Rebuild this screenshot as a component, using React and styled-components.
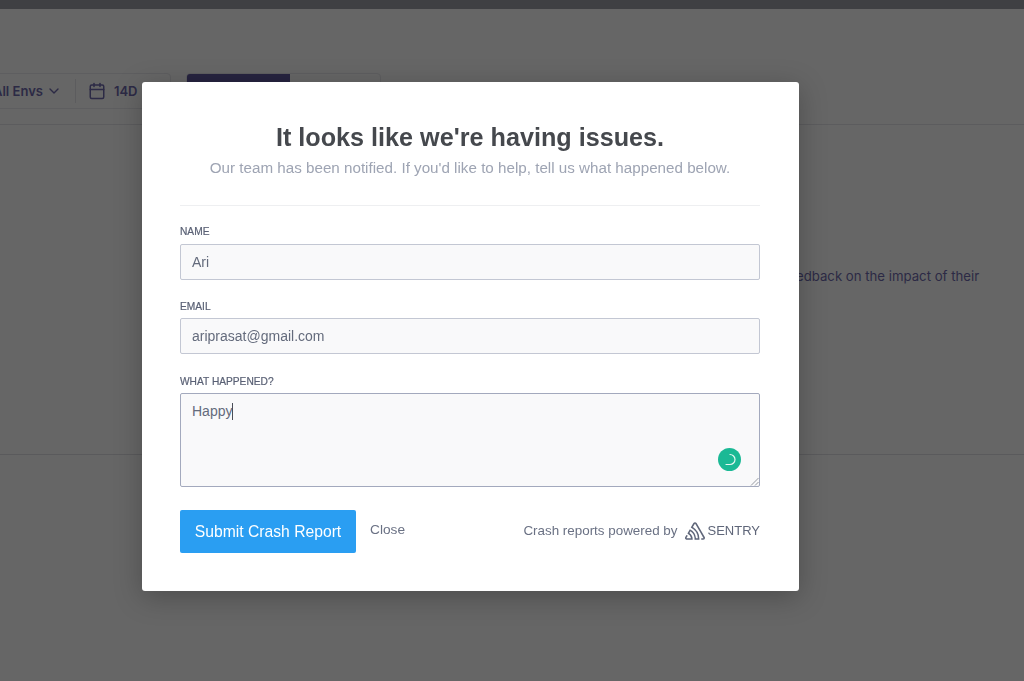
import React from 'react'
import styled, { createGlobalStyle } from 'styled-components'
import { ChevronDown, Calendar } from 'lucide-react'

const Global = createGlobalStyle`
  html, body {
    margin: 0;
    height: 100%;
    overflow: hidden;
    background: #666666;
  }
  * { box-sizing: border-box; }
`

const Page = styled.div`
  width: 1024px;
  height: 681px;
  overflow: hidden;
  background: #666666;
  font-family: Inter, sans-serif;
  color: #26233f;
`

const TopStrip = styled.div`
  height: 9px;
  background: #3f4043;
`

const Toolbar = styled.div`
  display: flex;
  align-items: flex-start;
  gap: 15px;
  height: 116px;
  padding: 64px 0 0 0;
  margin-left: -30px;
  border-bottom: 1px solid #5c5c5e;
`

const FilterGroup = styled.div`
  display: flex;
  align-items: center;
  width: 201px;
  height: 36px;
  padding-left: 22px;
  border: 1px solid #5e5e60;
  border-radius: 4px;
  font-size: 13px;
  font-weight: 600;
  color: #2c2a45;
`

const FilterItem = styled.div`
  display: flex;
  align-items: center;
  gap: ${props => props.gap}px;
  height: 100%;
  padding-right: ${props => props.right}px;
  padding-left: ${props => props.left}px;
`

const Separator = styled.div`
  width: 1px;
  height: 24px;
  background: #5c5c5e;
`

const Tabs = styled.div`
  display: flex;
  width: 195px;
  height: 36px;
  border: 1px solid #5e5e60;
  border-radius: 4px;
  overflow: hidden;
`

const ActiveTab = styled.div`
  width: 103px;
  background: #26233f;
`

const Body = styled.div`
  height: 330px;
  padding-top: 142px;
  padding-left: 796px;
  white-space: nowrap;
  font-size: 13.2px;
  line-height: 18px;
  border-bottom: 1px solid #5a5a5c;
  color: #2c2a45;
`

const Overlay = styled.div`
  position: fixed;
  left: 142px;
  top: 82px;
`

const Modal = styled.div`
  width: 657px;
  height: 509px;
  padding: 38px 39px 0 38px;
  background: #ffffff;
  border-radius: 3px;
  font-family: "Liberation Sans", Arial, sans-serif;
  box-shadow: 0 6px 28px rgba(0, 0, 0, 0.25);
`

const Header = styled.div`
  height: 86px;
  text-align: center;
  border-bottom: 1px solid #eeeff1;
`

const Title = styled.h2`
  margin: 0;
  font-size: 25.2px;
  line-height: 34px;
  font-weight: 700;
  color: #45484d;
`

const Subtitle = styled.p`
  margin: 4px 0 0;
  font-size: 15.2px;
  line-height: 20px;
  color: #9ea4b3;
`

const Field = styled.div`
  display: flex;
  flex-direction: column;
  margin-top: ${props => props.top}px;
`

const Label = styled.label`
  font-size: 10.2px;
  line-height: 12px;
  height: 13px;
  -webkit-text-stroke: 0.2px #5a6175;
  color: #5a6175;
  margin-bottom: ${props => props.gap}px;
`

const Input = styled.div`
  display: flex;
  align-items: center;
  height: ${props => props.h}px;
  padding: 0 11px;
  background: #f9f9fa;
  border: 1px solid #c3c7d3;
  border-radius: 2px;
  font-size: 14px;
  color: #646b7c;
`

const TextArea = styled(Input)`
  position: relative;
  align-items: flex-start;
  padding-top: 8px;
  line-height: 18px;
  border-color: #a3a9bd;
`

const Caret = styled.span`
  display: inline-block;
  width: 1px;
  height: 17px;
  vertical-align: -4px;
  background: #4a4e57;
`

const GrammarBadge = styled.div`
  position: absolute;
  right: 18px;
  bottom: 15px;
  width: 23px;
  height: 23px;
  border-radius: 50%;
  background: #1bb995;
  display: flex;
  align-items: center;
  justify-content: center;
`

const Grip = styled.svg`
  position: absolute;
  right: 0;
  bottom: 0;
`

const Footer = styled.div`
  display: flex;
  align-items: center;
  margin-top: 23px;
  height: 43px;
`

const Submit = styled.button`
  width: 176px;
  height: 43px;
  padding: 0;
  border: 0;
  border-radius: 2px;
  background: #2a9ef2;
  color: #ffffff;
  font-family: inherit;
  font-size: 15.7px;
`

const CloseLink = styled.a`
  margin-left: 14px;
  margin-bottom: 4px;
  font-size: 13.7px;
  color: #6a7184;
`

const PoweredBy = styled.div`
  display: flex;
  align-items: center;
  margin-left: auto;
  margin-bottom: 2px;
  font-size: 13.4px;
  color: #6a7184;
`

const SentryWord = styled.span`
  margin-left: 3px;
  font-size: 13px;
  color: #5f6679;
`

const LogoMark = styled.svg`
  margin-left: 7px;
`

const SentryLogo = () => (
  <LogoMark width="20" height="18" viewBox="0 0 50 44" fill="#5f6679">
    <path d="M29,2.26a4.67,4.67,0,0,0-8,0L14.42,13.53A32.21,32.21,0,0,1,32.17,40.19H27.55A27.68,27.68,0,0,0,12.09,17.47L6,28a15.92,15.92,0,0,1,9.23,12.17H4.62A.76.76,0,0,1,4,39.06l2.94-5a10.74,10.74,0,0,0-3.36-1.9l-2.91,5a4.54,4.54,0,0,0,1.69,6.24A4.66,4.66,0,0,0,4.62,44H19.15a19.4,19.4,0,0,0-8-17.31l2.31-4A23.87,23.87,0,0,1,23.76,44H36.07a35.88,35.88,0,0,0-16.41-31.8l4.67-8a.77.77,0,0,1,1.05-.27c.53.29,20.29,34.77,20.66,35.17a.76.76,0,0,1-.68,1.13H40.6q.09,1.91,0,3.81h4.78A4.59,4.59,0,0,0,50,39.43a4.49,4.49,0,0,0-.62-2.28Z" />
  </LogoMark>
)

export default function App() {
  return (
    <Page>
      <Global />
      <TopStrip />
      <Toolbar>
        <FilterGroup>
          <FilterItem gap={3} right={13} left={0}>
            All Envs <ChevronDown size={16} strokeWidth={2} />
          </FilterItem>
          <Separator />
          <FilterItem gap={8} right={0} left={12}>
            <Calendar size={18} strokeWidth={2} /> 14D
          </FilterItem>
        </FilterGroup>
        <Tabs>
          <ActiveTab />
        </Tabs>
      </Toolbar>
      <Body>edback on the impact of their</Body>
      <Overlay>
        <Modal>
          <Header>
            <Title>It looks like we're having issues.</Title>
            <Subtitle>Our team has been notified. If you'd like to help, tell us what happened below.</Subtitle>
          </Header>
          <Field top={20}>
            <Label gap={5}>NAME</Label>
            <Input h={36}>Ari</Input>
          </Field>
          <Field top={21}>
            <Label gap={4}>EMAIL</Label>
            <Input h={36}>ariprasat@gmail.com</Input>
          </Field>
          <Field top={22}>
            <Label gap={4}>WHAT HAPPENED?</Label>
            <TextArea h={94}>
              <span>Happy<Caret /></span>
              <GrammarBadge>
                <svg width="13" height="13" viewBox="0 0 13 13" fill="none" stroke="#e6f7f2" strokeWidth="1.2" strokeLinecap="round">
                  <path d="M7 1.5a5 5 0 0 1 0 10H3" />
                </svg>
              </GrammarBadge>
              <Grip width="9" height="9" viewBox="0 0 9 9" stroke="#8b8f99" strokeWidth="0.9">
                <path d="M1 8.5L8.5 1M5 8.5L8.5 5" />
              </Grip>
            </TextArea>
          </Field>
          <Footer>
            <Submit>Submit Crash Report</Submit>
            <CloseLink>Close</CloseLink>
            <PoweredBy>
              Crash reports powered by
              <SentryLogo />
              <SentryWord>SENTRY</SentryWord>
            </PoweredBy>
          </Footer>
        </Modal>
      </Overlay>
    </Page>
  )
}
